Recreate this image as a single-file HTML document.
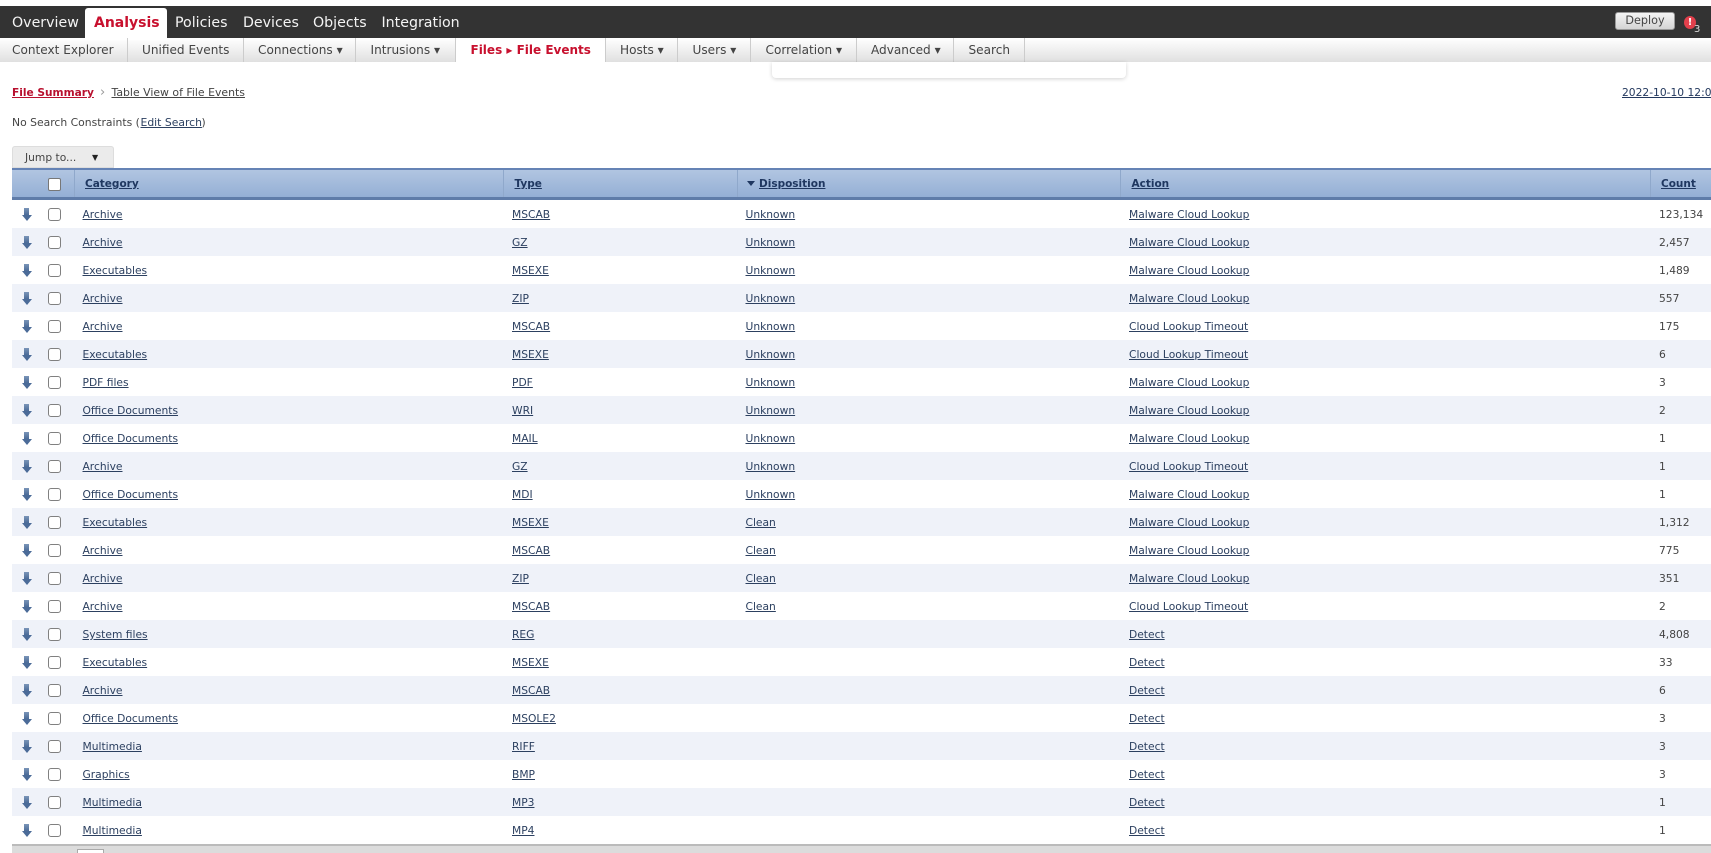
<!DOCTYPE html>
<html><head><meta charset="utf-8"><style>
html,body{margin:0;padding:0;width:1711px;height:853px;overflow:hidden;background:#fff}
body{position:relative;font-family:"DejaVu Sans","Liberation Sans",sans-serif;font-size:10.7px;color:#444}
div,span,a{position:absolute;white-space:nowrap}
a{color:#2c4060;text-decoration:underline}
#top{left:0;top:6px;width:1711px;height:32px;background:#333}
#sub{left:0;top:38px;width:1711px;height:24px;background:linear-gradient(#fff,#e0e0e0)}
.n{top:14px;font-size:14.2px;line-height:18px;color:#f4f4f4}
.s{top:42px;font-size:12.1px;line-height:16px;color:#444}
.v{top:38px;width:1px;height:24px;background:#ccc}
.b{top:85px;line-height:16px}
.r{left:12px;width:1699px;height:28px;line-height:29px}
.r:nth-of-type(even){background:#eff2f9}
.r i{position:absolute;left:12px;top:8px;width:5px;height:7px;background:linear-gradient(#7a95b8,#4b6b98)}
.r b{position:absolute;left:9.5px;top:15px;width:0;height:0;border-left:5px solid transparent;border-right:5px solid transparent;border-top:6px solid #4b6b98}
.r u{position:absolute;left:36px;top:8px;width:11px;height:11px;border:1px solid #808080;border-radius:3px;background:#fff}
.r a{top:0}
.a1{left:70.5px}.a2{left:500px}.a3{left:733.5px}.a4{left:1117px}.a5{left:1647px;color:#444}
.h{top:168px;left:12px;width:1699px;height:27px;border-top:2px solid #6583b5;border-bottom:3px solid #5f7ca9;background:linear-gradient(#b1c5e1,#94afd5)}
.h a{top:1px;line-height:27px;font-weight:bold;font-size:10.5px;color:#1f3760}
.hs{top:0;width:1px;height:27px;background:#8fa8cb}
</style></head><body>
<div id="top"></div>
<div id="sub"></div>
<div style="left:85px;top:8px;width:82px;height:32px;background:#fff;border-radius:3px 3px 0 0"></div>
<span class="n" style="left:12px">Overview</span>
<span class="n" style="left:94px;color:#c8102e;font-weight:bold;font-size:14px">Analysis</span>
<span class="n" style="left:175px">Policies</span>
<span class="n" style="left:243px">Devices</span>
<span class="n" style="left:313px">Objects</span>
<span class="n" style="left:381.5px">Integration</span>
<div style="left:1615px;top:12px;width:58px;height:16px;border:1px solid #999;border-radius:3px;background:linear-gradient(#f4f4f4,#d4d4d4);font-size:11.2px;line-height:16px;text-align:center;color:#444">Deploy</div>
<div style="left:1684px;top:16px;width:12px;height:13px;border-radius:50%;background:#e2404c;color:#fff;font-size:10px;font-weight:bold;line-height:13px;text-align:center">!</div>
<span style="left:1694px;top:24px;font-size:10px;line-height:12px;color:#ddd">3</span>
<div style="left:455.5px;top:38px;width:150px;height:24px;background:#fff"></div>
<div class="v" style="left:127px"></div><div class="v" style="left:242.5px"></div><div class="v" style="left:355px"></div><div class="v" style="left:455px"></div><div class="v" style="left:605px"></div><div class="v" style="left:677px"></div><div class="v" style="left:750px"></div><div class="v" style="left:856px"></div><div class="v" style="left:953px"></div><div class="v" style="left:1024px"></div>
<span class="s" style="left:12px">Context Explorer</span>
<span class="s" style="left:142px">Unified Events</span>
<span class="s" style="left:258px">Connections ▾</span>
<span class="s" style="left:370.5px">Intrusions ▾</span>
<span class="s" style="left:470.5px;color:#c8102e;font-weight:bold;font-size:12px">Files ▸ File Events</span>
<span class="s" style="left:620px">Hosts ▾</span>
<span class="s" style="left:692.5px">Users ▾</span>
<span class="s" style="left:765.5px">Correlation ▾</span>
<span class="s" style="left:871px">Advanced ▾</span>
<span class="s" style="left:968.5px">Search</span>
<div style="left:772px;top:62px;width:354px;height:16px;background:#fff;border-radius:0 0 4px 4px;box-shadow:0 1px 4px rgba(0,0,0,.18)"></div>
<a class="b" href="#" style="left:12px;color:#b8102e;font-weight:bold;font-size:10.6px">File Summary</a>
<span class="b" style="left:100px;font-size:13px;color:#999">›</span>
<a class="b" href="#" style="left:111.5px;font-size:10.9px;color:#444">Table View of File Events</a>
<a class="b" href="#" style="left:1622px;color:#24395e">2022-10-10 12:00</a>
<span class="b" style="left:12px;top:115px;font-size:10.8px">No Search Constraints (</span>
<a class="b" href="#" style="left:140.5px;top:115px;font-size:10.8px">Edit Search</a>
<span class="b" style="left:201.5px;top:115px">)</span>
<div style="left:12px;top:146px;width:102px;height:22px;background:#ebebeb;border-radius:3px 3px 0 0;box-shadow:inset 0 0 0 1px #ddd"></div>
<span style="left:25px;top:151px;line-height:14px">Jump to...</span>
<span style="left:92px;top:151px;line-height:14px;font-size:8px;color:#222">▼</span>
<div class="h">
<span class="hs" style="left:62px"></span><span class="hs" style="left:491px"></span><span class="hs" style="left:725px"></span><span class="hs" style="left:1108px"></span><span class="hs" style="left:1638px"></span>
<span style="left:36px;top:8px;width:11px;height:11px;border:1px solid #777;border-radius:2px;background:#fff"></span>
<a href="#" style="left:73px">Category</a>
<a href="#" style="left:502.5px">Type</a>
<span style="left:735px;top:11px;width:0;height:0;border-left:4px solid transparent;border-right:4px solid transparent;border-top:5px solid #1f3760"></span>
<a href="#" style="left:747px">Disposition</a>
<a href="#" style="left:1119.5px">Action</a>
<a href="#" style="left:1649px">Count</a>
</div>
<section style="position:absolute;left:0;top:200px;width:1711px">
<div class="r" style="top:0"><i></i><b></b><u></u><a class="a1" href="#">Archive</a><a class="a2" href="#">MSCAB</a><a class="a3" href="#">Unknown</a><a class="a4" href="#">Malware Cloud Lookup</a><span class="a5">123,134</span></div>
<div class="r" style="top:28px"><i></i><b></b><u></u><a class="a1" href="#">Archive</a><a class="a2" href="#">GZ</a><a class="a3" href="#">Unknown</a><a class="a4" href="#">Malware Cloud Lookup</a><span class="a5">2,457</span></div>
<div class="r" style="top:56px"><i></i><b></b><u></u><a class="a1" href="#">Executables</a><a class="a2" href="#">MSEXE</a><a class="a3" href="#">Unknown</a><a class="a4" href="#">Malware Cloud Lookup</a><span class="a5">1,489</span></div>
<div class="r" style="top:84px"><i></i><b></b><u></u><a class="a1" href="#">Archive</a><a class="a2" href="#">ZIP</a><a class="a3" href="#">Unknown</a><a class="a4" href="#">Malware Cloud Lookup</a><span class="a5">557</span></div>
<div class="r" style="top:112px"><i></i><b></b><u></u><a class="a1" href="#">Archive</a><a class="a2" href="#">MSCAB</a><a class="a3" href="#">Unknown</a><a class="a4" href="#">Cloud Lookup Timeout</a><span class="a5">175</span></div>
<div class="r" style="top:140px"><i></i><b></b><u></u><a class="a1" href="#">Executables</a><a class="a2" href="#">MSEXE</a><a class="a3" href="#">Unknown</a><a class="a4" href="#">Cloud Lookup Timeout</a><span class="a5">6</span></div>
<div class="r" style="top:168px"><i></i><b></b><u></u><a class="a1" href="#">PDF files</a><a class="a2" href="#">PDF</a><a class="a3" href="#">Unknown</a><a class="a4" href="#">Malware Cloud Lookup</a><span class="a5">3</span></div>
<div class="r" style="top:196px"><i></i><b></b><u></u><a class="a1" href="#">Office Documents</a><a class="a2" href="#">WRI</a><a class="a3" href="#">Unknown</a><a class="a4" href="#">Malware Cloud Lookup</a><span class="a5">2</span></div>
<div class="r" style="top:224px"><i></i><b></b><u></u><a class="a1" href="#">Office Documents</a><a class="a2" href="#">MAIL</a><a class="a3" href="#">Unknown</a><a class="a4" href="#">Malware Cloud Lookup</a><span class="a5">1</span></div>
<div class="r" style="top:252px"><i></i><b></b><u></u><a class="a1" href="#">Archive</a><a class="a2" href="#">GZ</a><a class="a3" href="#">Unknown</a><a class="a4" href="#">Cloud Lookup Timeout</a><span class="a5">1</span></div>
<div class="r" style="top:280px"><i></i><b></b><u></u><a class="a1" href="#">Office Documents</a><a class="a2" href="#">MDI</a><a class="a3" href="#">Unknown</a><a class="a4" href="#">Malware Cloud Lookup</a><span class="a5">1</span></div>
<div class="r" style="top:308px"><i></i><b></b><u></u><a class="a1" href="#">Executables</a><a class="a2" href="#">MSEXE</a><a class="a3" href="#">Clean</a><a class="a4" href="#">Malware Cloud Lookup</a><span class="a5">1,312</span></div>
<div class="r" style="top:336px"><i></i><b></b><u></u><a class="a1" href="#">Archive</a><a class="a2" href="#">MSCAB</a><a class="a3" href="#">Clean</a><a class="a4" href="#">Malware Cloud Lookup</a><span class="a5">775</span></div>
<div class="r" style="top:364px"><i></i><b></b><u></u><a class="a1" href="#">Archive</a><a class="a2" href="#">ZIP</a><a class="a3" href="#">Clean</a><a class="a4" href="#">Malware Cloud Lookup</a><span class="a5">351</span></div>
<div class="r" style="top:392px"><i></i><b></b><u></u><a class="a1" href="#">Archive</a><a class="a2" href="#">MSCAB</a><a class="a3" href="#">Clean</a><a class="a4" href="#">Cloud Lookup Timeout</a><span class="a5">2</span></div>
<div class="r" style="top:420px"><i></i><b></b><u></u><a class="a1" href="#">System files</a><a class="a2" href="#">REG</a><a class="a4" href="#">Detect</a><span class="a5">4,808</span></div>
<div class="r" style="top:448px"><i></i><b></b><u></u><a class="a1" href="#">Executables</a><a class="a2" href="#">MSEXE</a><a class="a4" href="#">Detect</a><span class="a5">33</span></div>
<div class="r" style="top:476px"><i></i><b></b><u></u><a class="a1" href="#">Archive</a><a class="a2" href="#">MSCAB</a><a class="a4" href="#">Detect</a><span class="a5">6</span></div>
<div class="r" style="top:504px"><i></i><b></b><u></u><a class="a1" href="#">Office Documents</a><a class="a2" href="#">MSOLE2</a><a class="a4" href="#">Detect</a><span class="a5">3</span></div>
<div class="r" style="top:532px"><i></i><b></b><u></u><a class="a1" href="#">Multimedia</a><a class="a2" href="#">RIFF</a><a class="a4" href="#">Detect</a><span class="a5">3</span></div>
<div class="r" style="top:560px"><i></i><b></b><u></u><a class="a1" href="#">Graphics</a><a class="a2" href="#">BMP</a><a class="a4" href="#">Detect</a><span class="a5">3</span></div>
<div class="r" style="top:588px"><i></i><b></b><u></u><a class="a1" href="#">Multimedia</a><a class="a2" href="#">MP3</a><a class="a4" href="#">Detect</a><span class="a5">1</span></div>
<div class="r" style="top:616px"><i></i><b></b><u></u><a class="a1" href="#">Multimedia</a><a class="a2" href="#">MP4</a><a class="a4" href="#">Detect</a><span class="a5">1</span></div>
</section>
<div style="left:12px;top:844px;width:1699px;height:7px;border-top:2px solid #bbb;background:#dcdcdc"></div>
<div style="left:77px;top:849px;width:25px;height:6px;background:#fff;border:1px solid #aaa"></div>
</body></html>
